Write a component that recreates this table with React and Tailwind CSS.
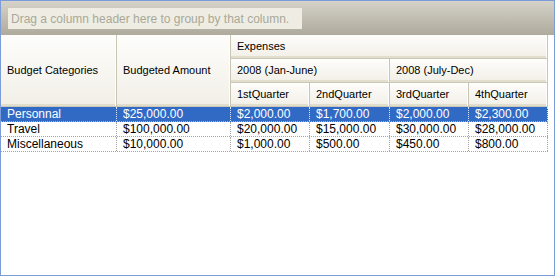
import React from "react";

const font = { fontFamily: '"Liberation Sans", Arial, sans-serif' };

const rows = [
  ["Personnal", "$25,000.00", "$2,000.00", "$1,700.00", "$2,000.00", "$2,300.00"],
  ["Travel", "$100,000.00", "$20,000.00", "$15,000.00", "$30,000.00", "$28,000.00"],
  ["Miscellaneous", "$10,000.00", "$1,000.00", "$500.00", "$450.00", "$800.00"],
];

function Head({ className = "", children }) {
  return (
    <div
      className={
        "flex items-center pl-[6px] text-[11px] text-black border-r border-b border-r-[#c9c5b5] border-b-[#cbc7b8] bg-gradient-to-b from-[#fdfdfb] to-[#f1efe7] shadow-[inset_-1px_0_0_#ffffff,inset_0_-2px_0_#e2decd] " +
        className
      }
    >
      {children}
    </div>
  );
}

export default function App() {
  return (
    <div
      className="w-[555px] h-[276px] border border-[#7b9bd9] bg-white flex flex-col overflow-hidden"
      style={font}
    >
      {/* grouping panel */}
      <div className="h-[34px] shrink-0 bg-gradient-to-b from-[#d5d2c9] to-[#aeaa9c] px-[7px] pt-[7px]">
        <div className="w-[294px] h-[21px] bg-[#efede3] flex items-center pl-[3px] text-[12px] text-[#a9a898] whitespace-nowrap">
          Drag a column header here to group by that column.
        </div>
      </div>

      {/* header bands */}
      <div className="grid w-[547px] grid-cols-[116px_114px_79px_80px_79px_79px] grid-rows-[24px_24px_24px]">
        <Head className="row-span-3">Budget Categories</Head>
        <Head className="row-span-3">Budgeted Amount</Head>
        <Head className="col-span-4">Expenses</Head>
        <Head className="col-span-2">2008 (Jan-June)</Head>
        <Head className="col-span-2">2008 (July-Dec)</Head>
        <Head>1stQuarter</Head>
        <Head>2ndQuarter</Head>
        <Head>3rdQuarter</Head>
        <Head>4thQuarter</Head>
      </div>

      {/* data rows */}
      <div className="w-[547px]">
        {rows.map((r, i) => {
          const sel = i === 0;
          return (
            <div
              key={r[0]}
              className={
                "grid grid-cols-[116px_114px_79px_80px_79px_79px] h-[15px] border-b border-dotted " +
                (sel ? "bg-[#316ac5] text-white border-[#9db4e0]" : "text-black border-[#a5a5a5]")
              }
            >
              {r.map((c, j) => (
                <div
                  key={j}
                  className={
                    "flex items-center pl-[6px] text-[12px] leading-none whitespace-nowrap border-r border-dotted " +
                    (sel ? "border-[#dfe7f6]" : "border-[#a5a5a5]")
                  }
                >
                  {c}
                </div>
              ))}
            </div>
          );
        })}
      </div>
    </div>
  );
}
